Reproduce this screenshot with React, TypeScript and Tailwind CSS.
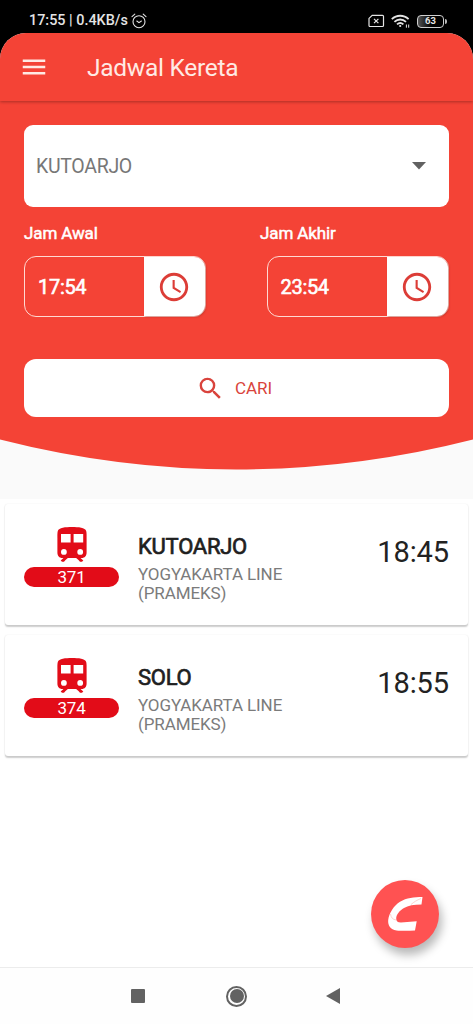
import React from 'react';
import { MdAccessTime, MdMenu, MdSearch } from 'react-icons/md';

interface Train {
  number: string;
  destination: string;
  line: string;
  time: string;
}

const trains: Train[] = [
  { number: '371', destination: 'KUTOARJO', line: 'YOGYAKARTA LINE (PRAMEKS)', time: '18:45' },
  { number: '374', destination: 'SOLO', line: 'YOGYAKARTA LINE (PRAMEKS)', time: '18:55' },
];

const StatusBar: React.FC = () => (
  <div className="flex h-[33px] items-start justify-between pl-[29px] pr-[26px] pt-[12px] text-[#e4e4e4]">
    <div className="flex items-center gap-[3px]">
      <span className="whitespace-nowrap text-[14.4px] font-medium leading-[18px]">17:55 | 0.4KB/s</span>
      <svg width="16" height="16" viewBox="0 0 16 16" fill="none" stroke="currentColor" strokeWidth="1.1" strokeLinecap="round">
        <circle cx="8" cy="8.7" r="6" />
        <path d="M1 3.6 3.8 1.2M15 3.6l-2.8-2.4M5.8 8 8 9.6l2.4-1.6" />
      </svg>
    </div>
    <div className="flex h-[18px] items-center">
      <svg width="17" height="14" viewBox="0 0 17 14" fill="none" stroke="currentColor" strokeWidth="1.2">
        <path d="M4.2 1.3h10.3a1 1 0 0 1 1 1v9.2a1 1 0 0 1-1 1H2a1 1 0 0 1-1-1V4.4z" />
        <path d="m6 4.8 4.4 4.4M10.4 4.8 6 9.2" />
      </svg>
      <svg className="ml-[6px]" width="20" height="16" viewBox="0 0 20 16" fill="none" stroke="currentColor" strokeWidth="1.8">
        <path d="M.8 6.2c4.8-4.6 12-4.6 16.8 0M3.4 8.9c3.4-3.2 8.2-3.2 11.6 0M6 11.4c2-1.8 4.4-1.8 6.4 0" />
        <circle cx="9.2" cy="13" r="1.1" fill="currentColor" stroke="none" />
        <path d="M15.4 11.5v3.2M17.7 11.5v3.2" strokeWidth="1" />
      </svg>
      <div className="ml-[6px] flex h-[13px] w-[27px] items-center justify-center rounded-[4px] border-[1.5px] border-[#cfcfcf] bg-gradient-to-r from-[#555] to-black to-70% text-[9.5px] font-bold leading-none">
        63
      </div>
      <div className="ml-px h-[5px] w-[2px] rounded-r bg-[#bbb]" />
    </div>
  </div>
);

const TimeField: React.FC<{ value: string }> = ({ value }) => (
  <div className="flex h-[61px] w-[182px] rounded-[12px] border border-[#ffd9d2]">
    <div className="flex flex-1 items-center pl-[13px] text-[20px] tracking-[-0.3px] text-white [-webkit-text-stroke:0.6px_white]">
      {value}
    </div>
    <div className="flex w-[61px] items-center justify-center rounded-r-[11px] bg-white pr-px text-[#dc3d37] shadow-[1px_1px_2px_rgba(120,20,10,0.35)]">
      <MdAccessTime size={34} />
    </div>
  </div>
);

const TrainIcon: React.FC = () => (
  <svg width="30" height="35" viewBox="0 0 30 35" fill="#e20c18">
    <path
      fillRule="evenodd"
      d="M15 0c6.5 0 13.2.6 14.2 4 .5 2 .4 4.5.4 7v14.5c0 3.3-1.9 5.5-5 5.5H5.4c-3.1 0-5-2.2-5-5.5V11c0-2.5-.1-5 .4-7C1.8.6 8.5 0 15 0zM4 7v8.5h9.6V7zM16.6 7v8.5h9.6V7zM6.9 22a2.9 2.9 0 1 0 0 5.8 2.9 2.9 0 0 0 0-5.8zM23.2 22a2.9 2.9 0 1 0 0 5.8 2.9 2.9 0 0 0 0-5.8z"
    />
    <path d="M7 30.5h4.5L8.5 33 7 34.8H5L3.7 33.5zM23 30.5h-4.5l3 2.5 1.500 1.800h2l1.300-1.300z" />
  </svg>
);

const TrainCard: React.FC<{ train: Train }> = ({ train }) => (
  <div className="flex h-[121px] rounded-[3px] bg-white px-[19px] shadow-[0_1.5px_1.5px_rgba(0,0,0,0.2),0_0_2px_rgba(0,0,0,0.06)]">
    <div className="flex w-[95px] flex-col items-center pt-[23px]">
      <TrainIcon />
      <div className="mt-[5px] h-[20px] w-full rounded-full bg-[#e20c18] text-center text-[17px] leading-[21px] tracking-[-0.2px] text-white">
        {train.number}
      </div>
    </div>
    <div className="ml-[19px] w-[160px] pt-[30px]">
      <div className="text-[22px] leading-[26px] tracking-[-0.25px] text-[#1f1f1f] [-webkit-text-stroke:0.7px_#1f1f1f]">
        {train.destination}
      </div>
      <div className="mt-[5px] text-[17px] leading-[19px] tracking-[-0.1px] text-[#7b7b7b]">{train.line}</div>
    </div>
    <div className="ml-auto pt-[31px] text-[29px] leading-[34px] tracking-[-0.1px] text-[#222]">{train.time}</div>
  </div>
);

export default function App() {
  return (
    <div className="flex h-[1024px] w-[473px] flex-col overflow-hidden bg-black font-[Roboto,sans-serif]">
      <StatusBar />
      <div className="relative flex flex-1 flex-col overflow-hidden rounded-t-[26px] bg-[#fafafa]">
        <header className="relative z-10 flex h-[68px] shrink-0 items-center bg-[#f44336] pl-[19px] text-[#ffeae4] shadow-[0_1px_3px_rgba(0,0,0,0.3)]">
          <MdMenu size={30} />
          <h1 className="ml-[38px] mt-[2px] text-[24.5px] tracking-[-0.28px]">Jadwal Kereta</h1>
        </header>

        <section className="relative h-[398px] shrink-0 px-[24px] pt-[24px]">
          {/* Curved backdrop */}
          <svg className="absolute left-0 top-0" width="473" height="369" viewBox="0 0 473 369">
            <path d="M0 0H473V338.5Q355 368.5 236.5 368.5T0 338.5z" fill="#f44336" />
          </svg>
          <div className="relative">
            <div className="flex h-[82px] items-center justify-between rounded-[9px] bg-white pl-[12px] pr-[23px] text-[19.5px] tracking-[-0.3px] text-[#777]">
              <span className="pt-[2px]">KUTOARJO</span>
              <svg width="14" height="8" viewBox="0 0 14 8">
                <path d="M0 0h14L7 7.5z" fill="#616161" />
              </svg>
            </div>
            <div className="mt-[15px] flex text-[17px] leading-[22px] tracking-[-0.12px] text-white [-webkit-text-stroke:0.5px_white]">
              <span className="w-[236px]">Jam Awal</span>
              <span>Jam Akhir</span>
            </div>
            <div className="mt-[12px] flex justify-between pr-[0.5px]">
              <TimeField value="17:54" />
              <TimeField value="23:54" />
            </div>
            <button className="mt-[42px] flex h-[58px] w-full items-center justify-center gap-[10px] rounded-[12px] bg-white pr-[5px] text-[17px] text-[#d9433c]">
              <MdSearch size={29} />
              <span className="mt-[2px] tracking-[-0.1px]">CARI</span>
            </button>
          </div>
        </section>

        <main className="flex flex-1 flex-col gap-[10px] bg-white px-[5px] pt-[5px]">
          {trains.map((train) => (
            <TrainCard key={train.number} train={train} />
          ))}
        </main>

        <button className="absolute bottom-[76px] right-[34px] flex h-[68px] w-[68px] items-center justify-center rounded-full bg-[#ff5252] shadow-[3px_7px_10px_rgba(0,0,0,0.28)]">
          <svg width="36" height="36" viewBox="0 0 36 36">
            <path
              d="M35.5 1 34.5 8.5C27 8.5 21 9.500 17 12 12.500 14.500 9.500 18.500 9.200 22 9 25 10.500 26.500 14 26.500L29.700 25.300 28 34.400C21 35 14 35 9.500 34.400 3.500 33.500.7 29.500 1.200 24 2 17 7 9.500 13 5.700 19.500 1.800 27 1 35.500 1z"
              fill="#fff"
            />
            <path d="M3.500 18c.5 3.500 2 5.500 5.700 6M34 2.500c-4 1.500-7 3.500-10 6" fill="none" stroke="#ffb3ad" strokeWidth=".6" />
          </svg>
        </button>

        <nav className="flex h-[57px] shrink-0 items-center border-t border-[#ececec] bg-[#fefefe] pl-[131px]">
          <div className="h-[14px] w-[14px] rounded-[1px] bg-[#626262]" />
          <div className="ml-[81px] flex h-[21px] w-[21px] items-center justify-center rounded-full border-2 border-[#626262]">
            <div className="h-[14px] w-[14px] rounded-full bg-[#626262]" />
          </div>
          <svg className="ml-[79px]" width="14" height="16" viewBox="0 0 14 16">
            <path d="M14 0v16L0 8z" fill="#626262" />
          </svg>
        </nav>
      </div>
    </div>
  );
}
